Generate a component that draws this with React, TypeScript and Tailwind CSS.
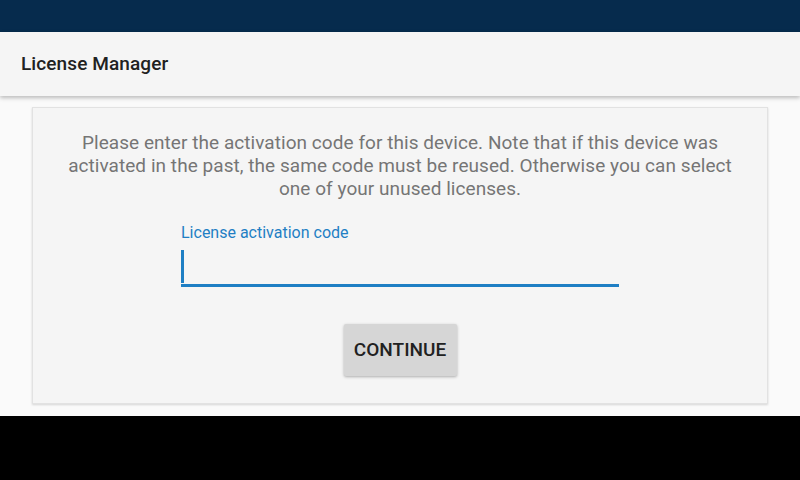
export default function App() {
  return (
    <div className="w-[800px] h-[480px] flex flex-col bg-black overflow-hidden" style={{ fontFamily: 'Roboto, "Noto Sans", sans-serif' }}>
      <div className="h-[32px] bg-[#062b4d] shrink-0" />
      <div className="h-[64px] bg-[#f5f5f5] shrink-0 flex items-center px-[21px] shadow-[0_2px_4px_rgba(0,0,0,0.25)] relative z-10">
        <span className="text-[19px] font-medium text-[#212121] tracking-[0.1px]">License Manager</span>
      </div>
      <div className="h-[320px] bg-[#fafafa] shrink-0 pt-[11px] px-[32px]">
        <div className="h-[297px] bg-[#f5f5f5] border border-[#e2e2e2] shadow-[0_1px_2px_rgba(0,0,0,0.15)] flex flex-col items-center pt-[23px]">
          <p className="text-[19px] leading-[23px] text-[#757575] text-center whitespace-nowrap tracking-[0.05px]">
            Please enter the activation code for this device. Note that if this device was
            <br />
            activated in the past, the same code must be reused. Otherwise you can select
            <br />
            one of your unused licenses.
          </p>
          <div className="w-[438px] mt-[24px] flex flex-col">
            <label className="text-[16px] leading-[18px] text-[#1f7fc4]">License activation code</label>
            <div className="mt-[8px] h-[37px] border-b-[3px] border-[#1f7fc4] flex items-start">
              <div className="w-[3px] h-[33px] bg-[#1f7fc4]" />
            </div>
          </div>
          <button className="mt-[37px] w-[113px] h-[52px] bg-[#d6d6d6] rounded-[2px] shadow-[0_1px_3px_rgba(0,0,0,0.3)] text-[19px] font-medium text-[#212121]">
            CONTINUE
          </button>
        </div>
      </div>
    </div>
  );
}
